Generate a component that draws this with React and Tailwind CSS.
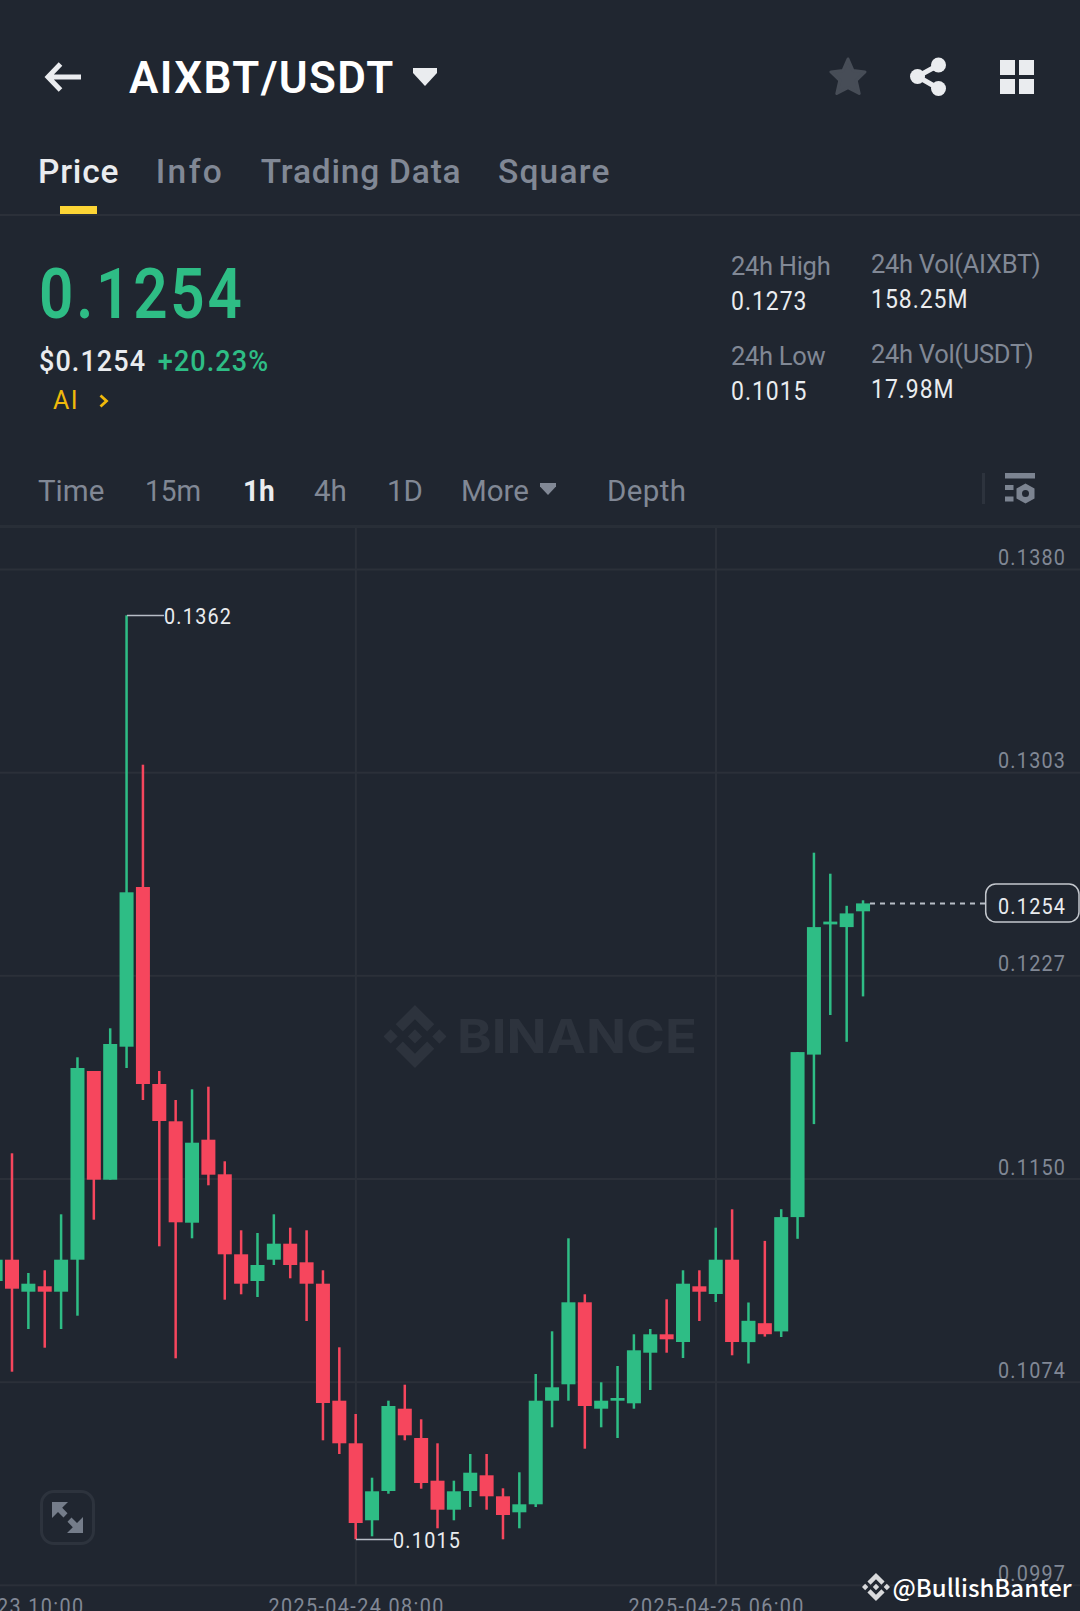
import React from 'react';
import { SiBinance } from 'react-icons/si';

const UP = '#2ebd85';
const DOWN = '#f6465d';

// direction, high, body top, body bottom, low (chart coordinates)
const candles = [
  ['u', 1259.7, 1259.7, 1281, 1281],
  ['d', 1153.3, 1259.7, 1288.7, 1371.7],
  ['u', 1273, 1283.7, 1291.7, 1329],
  ['d', 1270.3, 1286.3, 1291.7, 1347.7],
  ['u', 1214.3, 1259.7, 1291.7, 1329],
  ['u', 1057.3, 1068, 1259.7, 1315.7],
  ['d', 1071, 1071, 1179.7, 1219.7],
  ['u', 1028.3, 1044, 1179.7, 1179.7],
  ['u', 615.3, 892.3, 1046.7, 1068],
  ['d', 764.7, 887, 1084, 1100],
  ['d', 1071, 1084, 1121, 1246.3],
  ['d', 1100, 1121.3, 1222.3, 1358.3],
  ['u', 1089.3, 1142.7, 1222.7, 1238.3],
  ['d', 1086.7, 1139.7, 1174.7, 1185.3],
  ['d', 1161.3, 1174.3, 1254.3, 1299.7],
  ['d', 1230.3, 1254.3, 1283.7, 1294.3],
  ['u', 1233, 1265, 1281, 1297],
  ['u', 1214.3, 1243.7, 1259.7, 1265],
  ['d', 1227.7, 1243.7, 1265, 1278.3],
  ['d', 1230.3, 1262.3, 1283.7, 1321],
  ['d', 1270.3, 1283.7, 1403, 1440.3],
  ['d', 1347.3, 1400.7, 1443.3, 1454],
  ['d', 1414, 1443.3, 1523, 1539.3],
  ['u', 1477.7, 1491.3, 1520.3, 1536.3],
  ['u', 1400.7, 1406, 1491, 1493.7],
  ['d', 1384.7, 1408.7, 1435.3, 1440.3],
  ['d', 1419.3, 1438, 1483, 1488.7],
  ['d', 1443.3, 1480.7, 1509.7, 1528.3],
  ['u', 1480.7, 1491.3, 1509.7, 1520.3],
  ['u', 1454, 1472.7, 1491, 1507],
  ['d', 1454, 1475.3, 1496.3, 1509.7],
  ['d', 1488.3, 1496.3, 1515, 1539.3],
  ['u', 1472.3, 1504.3, 1512.3, 1528.3],
  ['u', 1374, 1400.7, 1504.3, 1507],
  ['u', 1331.3, 1387.3, 1400.7, 1427.3],
  ['u', 1238.3, 1302.3, 1384.3, 1400.7],
  ['d', 1294.3, 1302.3, 1406, 1448.7],
  ['u', 1382.3, 1400.7, 1408.7, 1427.3],
  ['u', 1366, 1398, 1400.7, 1438],
  ['u', 1334.3, 1350.3, 1403.3, 1408.7],
  ['u', 1329, 1334.3, 1352.7, 1390],
  ['d', 1299.3, 1334.3, 1339.3, 1352.7],
  ['u', 1270.3, 1283.7, 1342, 1358],
  ['d', 1270.3, 1286.3, 1291.7, 1321],
  ['u', 1227.7, 1259.7, 1294, 1302],
  ['d', 1209.3, 1259.7, 1342, 1355.3],
  ['u', 1302.5, 1320.8, 1342.1, 1363.5],
  ['d', 1240.9, 1323.2, 1334.2, 1336.6],
  ['u', 1209.2, 1217.1, 1331.4, 1337],
  ['u', 1052.1, 1052.1, 1217.1, 1238.8],
  ['u', 852.7, 927.1, 1054.6, 1124.1],
  ['u', 873.7, 921.6, 924.4, 1015],
  ['u', 905.8, 913.4, 927.1, 1041.8],
  ['u', 900.3, 903.4, 911.3, 996.4],
];

const priceTicks = [
  { label: '0.1380', y: 569.5 },
  { label: '0.1303', y: 772.7 },
  { label: '0.1227', y: 975.8 },
  { label: '0.1150', y: 1179 },
  { label: '0.1074', y: 1382.2 },
  { label: '0.0997', y: 1585.3 },
];

const timeTicks = [
  { label: '2025-04-23 10:00', x: -4.3 },
  { label: '2025-04-24 08:00', x: 355.9 },
  { label: '2025-04-25 06:00', x: 716 },
];

// slightly condensed digits, spaced out to a fixed width
const ChartText = ({ x, y, width = 67, fill = '#818895', children }) => (
  <text
    transform={`translate(${x} ${y}) scale(0.88 1)`}
    fill={fill}
    fontSize="22.5"
    textLength={width / 0.88}
    lengthAdjust="spacing"
  >
    {children}
  </text>
);

const CandleChart = () => (
  <svg viewBox="0 528 1080 1083" className="block w-[1080px] h-[1083px] font-['Roboto',sans-serif]">
    {priceTicks.map(({ y }) => (
      <rect key={y} x="0" y={y - 1} width="1080" height="2" fill="#2b3039" />
    ))}
    {timeTicks.slice(1).map(({ x }) => (
      <rect key={x} x={x - 1} y="528" width="2" height="1057" fill="#2b3039" />
    ))}

    <g fill="#2d333d">
      <g transform="translate(383.5 1005)">
        <SiBinance size={63} color="#2d333d" />
      </g>
      <text x="457" y="1053" fontSize="47" fontWeight="700" fontFamily="Inter, sans-serif" textLength="240" lengthAdjust="spacingAndGlyphs">
        BINANCE
      </text>
    </g>

    {candles.map(([dir, high, top, bottom, low], i) => {
      const x = 12 + (i - 1) * 16.366;
      return (
        <g key={i} fill={dir === 'u' ? UP : DOWN}>
          <rect x={x - 1.25} y={high} width="2.5" height={low - high} />
          <rect x={x - 7} y={top} width="14" height={bottom - top} />
        </g>
      );
    })}

    <path d="M127 615.5h37M356 1539.5h37" stroke="#b7bdc6" strokeWidth="1.5" />
    <ChartText x="164" y="624" fill="#eaecef">0.1362</ChartText>
    <ChartText x="393" y="1548" fill="#eaecef">0.1015</ChartText>

    {priceTicks.map(({ label, y }) => (
      <ChartText key={label} x="998" y={y - 4.5}>{label}</ChartText>
    ))}
    {timeTicks.map(({ label, x }) => (
      <ChartText key={label} x={x - 87.5} y="1614" width={175}>{label}</ChartText>
    ))}

    <path d="M870 903.5H985" stroke="#b7bdc6" strokeWidth="2" strokeDasharray="5 5" />
    <rect x="985.7" y="884" width="93.3" height="38" rx="10" fill="#202630" stroke="#c3c7cd" strokeWidth="1.5" />
    <ChartText x="998" y="914" fill="#eaecef">0.1254</ChartText>
  </svg>
);

const Stat = ({ label, value }) => (
  <div className="h-[90px] text-[25.5px] leading-[35px] whitespace-nowrap">
    <p className="text-[#818895] tracking-[-0.3px]">{label}</p>
    <p className="text-[#eaecef] tracking-[1.1px] origin-left scale-x-90">{value}</p>
  </div>
);

const App = () => {
  return (
    <div className="relative w-[1080px] h-[1611px] overflow-hidden bg-[#202630] font-['Roboto',sans-serif]">
      {/* Title bar */}
      <header className="flex items-center h-[153px] pl-11 pr-[46px]">
        <svg viewBox="0 0 38 30" className="w-[38px] h-[30px]" fill="none" stroke="#eaecef" strokeWidth="5">
          <path d="M37 15H5M16.5 2L4 15l12.5 13" />
        </svg>
        <h1 className="ml-[47px] pt-[3px] text-[44px] font-semibold text-white tracking-[1.4px]">AIXBT/USDT</h1>
        <svg viewBox="0 0 24 18" className="ml-[18px] w-6 h-[18px]" fill="#eaecef">
          <path d="M0 0h24v5L12 18 0 5z" />
        </svg>
        <div className="ml-auto flex items-center">
          <svg viewBox="0 0 38 39" className="w-[38px] h-[39px]" fill="#474d57" stroke="#474d57" strokeWidth="3" strokeLinejoin="round">
            <path d="M19 2l5 11.5 12 1.4-8.8 8.4L30.200 36.500 19 30.700 7.800 36.500 10.800 23.300 2 14.900l12-1.400z" />
          </svg>
          <svg viewBox="0 0 36 39" className="ml-[43px] w-9 h-[39px]" fill="#eaecef" stroke="#eaecef">
            <path d="M28.500 8L7.500 19.500l21 12" fill="none" strokeWidth="5" />
            <g stroke="none">
              <circle cx="28.500" cy="8" r="7.500" />
              <circle cx="7.500" cy="19.500" r="7.500" />
              <circle cx="28.500" cy="31.500" r="7.500" />
            </g>
          </svg>
          <svg viewBox="0 0 34 34" className="ml-[54px] w-[34px] h-[34px]" fill="#eaecef">
            <path d="M0 0h15v15H0zM19 0h15v15H19zM0 19h15v15H0zM19 19h15v15H19z" />
          </svg>
        </div>
      </header>

      {/* Tabs */}
      <nav className="flex items-start gap-[36.500px] h-[63px] pl-[38px] border-b-2 border-[#2b3039] text-[33.500px] leading-[37px] font-medium text-[#818895] tracking-[0.8px]">
        <div className="flex flex-col items-center h-full text-[#eaecef]">
          Price
          <span className="mt-auto w-[37px] h-2 bg-[#fcd535]" />
        </div>
        <span className="tracking-[2.400px]">Info</span>
        <span>Trading Data</span>
        <span className="tracking-[1.200px]">Square</span>
      </nav>

      {/* Price summary */}
      <section className="flex justify-between h-[222px] pl-[39px] pt-[31px]">
        <div>
          <p className="mt-[5px] text-[70px] leading-[84px] font-semibold tracking-[3.200px] text-[#2ebd85] origin-left scale-x-[0.86]">0.1254</p>
          <p className="flex gap-[13px] mt-[7px] text-[30px] leading-9 font-medium tracking-[1.200px] origin-left scale-x-90">
            <span className="text-[#eaecef]">$0.1254</span>
            <span className="text-[#2ebd85]">+20.23%</span>
          </p>
          <div className="flex items-center mt-1 ml-[14px] text-[25px] leading-9 tracking-[1.500px] text-[#f0b90b]">
            AI
            <svg viewBox="0 0 10 14" className="ml-5 w-[10px] h-[14px]" fill="none" stroke="#f0b90b" strokeWidth="2.8">
              <path d="M1.500 1.500L7.500 7l-6 5.500" />
            </svg>
          </div>
        </div>
        <div className="flex">
          <div className="w-[140px] pt-0.5">
            <Stat label="24h High" value="0.1273" />
            <Stat label="24h Low" value="0.1015" />
          </div>
          <div className="w-[209px]">
            <Stat label="24h Vol(AIXBT)" value="158.25M" />
            <Stat label="24h Vol(USDT)" value="17.98M" />
          </div>
        </div>
      </section>

      {/* Interval picker */}
      <div className="flex items-center h-[90px] pl-[38px] pr-[45px] pt-[14px] border-b-[3px] border-[#282e37] text-[29.5px] leading-8 text-[#818895]">
        <span className="w-[107px] pt-1">Time</span>
        <span className="w-[98px] pt-1 origin-left scale-x-95">15m</span>
        <span className="w-[71px] pt-1 font-bold text-[#eaecef] origin-left scale-x-95">1h</span>
        <span className="w-[73px] pt-1">4h</span>
        <span className="w-[74px] pt-1">1D</span>
        <span className="w-[79px] pt-1">More</span>
        <svg viewBox="0 0 16 12" className="w-4 h-3" fill="#818895">
          <path d="M0 0h16v3.500L8 12 0 3.500z" />
        </svg>
        <span className="ml-[51px] pt-1 tracking-[0.4px]">Depth</span>
        <span className="ml-auto w-[3px] h-[31px] bg-[#2d333d]" />
        <svg viewBox="0 0 30 31" className="ml-5 w-[30px] h-[31px]" fill="#7c8491">
          <path d="M0 0h30v5.500H0zM0 12h8.500v5H0zM0 23.500h8.500v5H0z" />
          <path fillRule="evenodd" d="M20.500 10.500l9 5v10l-9 5-9-5v-10zM20.500 17a3.500 3.500 0 1 0 0 7 3.500 3.500 0 0 0 0-7z" />
        </svg>
      </div>

      <CandleChart />

      {/* Fullscreen toggle */}
      <button className="absolute left-10 top-[1490px] flex items-center justify-center w-[55px] h-[55px] rounded-[14px] border-[3px] border-[#2d333d]">
        <svg viewBox="0 0 31 31" className="w-[31px] h-[31px]" fill="#757d8a">
          <path d="M0 0h16l-5.800 5.800 5.300 5.500-4 4.200L6 10l-6 6z" />
          <path d="M31 31H15l5.800-5.800-5.300-5.500 4-4.200L25 21l6-6z" />
        </svg>
      </button>

      {/* Author credit */}
      <div className="absolute left-[861.500px] top-[1569px] flex items-center h-9 text-white whitespace-nowrap">
        <SiBinance className="w-7 h-7 text-[#d9dadc]" />
        <span className="ml-[3px] text-[24px] font-medium font-['Noto_Sans_CJK_SC',sans-serif]">@BullishBanter</span>
      </div>
    </div>
  );
};

export default App;
